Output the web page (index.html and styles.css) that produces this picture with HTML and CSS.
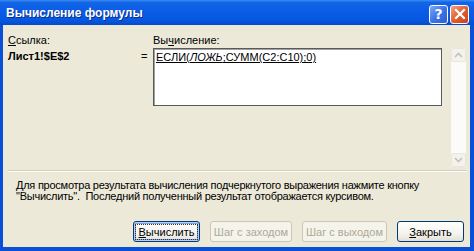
FILE: index.html
```html
<!DOCTYPE html>
<html>
<head>
  <title>Вычисление формулы</title>
  <meta charset="utf-8">
  <link rel="stylesheet" href="styles.css">
</head>
<body>
  <div class="window">
    <div class="titlebar">
      <span class="title">Вычисление формулы</span>
      <div class="caption-buttons">
        <span class="cap-btn help">?</span>
        <span class="cap-btn close">
          <svg width="12" height="12" viewBox="0 0 12 12"><path d="M2 2 L10 10 M10 2 L2 10" stroke="#fff" stroke-width="2.2" stroke-linecap="square"/></svg>
        </span>
      </div>
    </div>
    <div class="client">
      <div class="top">
        <div class="ref-col">
          <div class="label"><u>С</u>сылка:</div>
          <div class="ref-value">Лист1!$E$2</div>
        </div>
        <div class="eq-col">=</div>
        <div class="eval-col">
          <div class="label">Вы<u>ч</u>исление:</div>
          <div class="eval-box"><span class="formula">ЕСЛИ(<i>ЛОЖЬ</i>;СУММ(C2:C10);0)</span></div>
        </div>
        <div class="scrollbar">
          <span class="arrow">
            <svg width="9" height="6" viewBox="0 0 9 6"><path d="M1 5 L4.5 1.5 L8 5" fill="none" stroke="#c4c2b8" stroke-width="1.6"/></svg>
          </span>
          <span class="arrow">
            <svg width="9" height="6" viewBox="0 0 9 6"><path d="M1 1 L4.5 4.5 L8 1" fill="none" stroke="#c4c2b8" stroke-width="1.6"/></svg>
          </span>
        </div>
      </div>
      <div class="separator"></div>
      <p class="hint">Для просмотра результата вычисления подчеркнутого выражения нажмите кнопку<br>"Вычислить".&nbsp; Последний полученный результат отображается курсивом.</p>
      <div class="buttons">
        <button class="btn calc"><span class="focus"><u>В</u>ычислить</span></button>
        <button class="btn step-in" disabled>Шаг с заходом</button>
        <button class="btn step-out" disabled>Шаг с выходом</button>
        <button class="btn close-btn"><u>З</u>акрыть</button>
      </div>
    </div>
  </div>
</body>
</html>
```

FILE: styles.css
```css
body {
  margin: 0;
  padding: 0;
  font-family: "Liberation Sans", Arial, sans-serif;
  font-size: 11px;
  color: #000;
  background: #0a4fd8;
}
.window {
  width: 474px;
  height: 251px;
  display: flex;
  flex-direction: column;
}
.titlebar {
  height: 25px;
  display: flex;
  align-items: center;
  justify-content: space-between;
  padding: 0 5px 0 6px;
  background: linear-gradient(to bottom, #3c8cf6 0%, #1266e6 10%, #0a5ce6 45%, #0658e0 80%, #0449cc 100%);
}
.title {
  color: #fff;
  font-family: "Liberation Sans", Arial, sans-serif;
  font-weight: bold;
  font-size: 12px;
  margin-top: 1px;
  text-shadow: 1px 1px 0 #0a2e8a;
}
.caption-buttons {
  display: flex;
  gap: 2px;
  margin-top: 3px;
}
.cap-btn {
  width: 17px;
  height: 17px;
  border: 1px solid #fff;
  border-radius: 3px;
  display: flex;
  align-items: center;
  justify-content: center;
  color: #fff;
}
.help {
  background: linear-gradient(135deg, #7fa8f7 0%, #3c75e8 50%, #2a5fd6 100%);
  font-family: "DejaVu Sans", sans-serif;
  font-weight: bold;
  font-size: 14px;
}
.close {
  background: linear-gradient(135deg, #f2a184 0%, #e2602f 50%, #c7401a 100%);
}
.client {
  flex: 1;
  background: #ece9d8;
  border-style: solid;
  border-color: #0a4fd8;
  border-width: 0 4px 4px 3px;
  padding: 8px 4px 0 5px;
  display: flex;
  flex-direction: column;
}
.top {
  display: flex;
  height: 134px;
}
.label {
  height: 14px;
  line-height: 14px;
}
.ref-col {
  width: 130px;
}
.ref-value {
  font-weight: bold;
  margin-top: 2px;
  line-height: 14px;
}
.eq-col {
  width: 15px;
  padding-top: 16px;
  line-height: 14px;
  padding-left: 3px;
  box-sizing: border-box;
}
.eval-col {
  width: 289px;
}
.eval-box {
  height: 58px;
  margin-top: 1px;
  background: #fff;
  border: 1px solid #5a5a5a;
  box-shadow: inset 1px 1px 0 #a0a0a0;
  box-sizing: border-box;
  padding: 2px 2px;
  line-height: 13px;
}
.formula {
  text-decoration: underline;
}
.scrollbar {
  width: 15px;
  margin: 15px 0 0 9px;
  height: 119px;
  background: #fbfbf9;
  display: flex;
  flex-direction: column;
  justify-content: space-between;
}
.arrow {
  height: 14px;
  background: #f3f2ec;
  border: 1px solid #e8e6dd;
  border-radius: 2px;
  box-sizing: border-box;
  display: flex;
  align-items: center;
  justify-content: center;
}
.separator {
  margin: 3px 0 0 0;
  height: 0;
  border-top: 1px solid #d0cdbf;
  border-bottom: 1px solid #fff;
}
.hint {
  margin: 8px 0 0 8px;
  line-height: 11px;
  white-space: nowrap;
  letter-spacing: -0.25px;
}
.buttons {
  display: flex;
  justify-content: flex-end;
  gap: 10px;
  margin-top: auto;
  margin-bottom: 5px;
  padding-right: 2px;
}
.btn {
  height: 21px;
  font-family: "Liberation Sans", Arial, sans-serif;
  font-size: 11px;
  color: #000;
  background: linear-gradient(to bottom, #ffffff 0%, #f4f3ee 60%, #e3e0d4 100%);
  border: 1px solid #003c74;
  border-radius: 3px;
  padding: 0;
  display: flex;
  align-items: center;
  justify-content: center;
}
.calc {
  width: 67px;
  box-shadow: inset 0 0 0 1px #b8cff5, inset 0 0 0 2px #7fa2e4;
}
.focus {
  outline: 1px dotted #333;
  outline-offset: 1px;
  padding: 0 2px;
}
.btn:disabled {
  color: #aca899;
  border-color: #c9c7ba;
  background: #f5f4ea;
}
.step-in {
  width: 82px;
}
.step-out {
  width: 85px;
}
.close-btn {
  width: 67px;
}
```
